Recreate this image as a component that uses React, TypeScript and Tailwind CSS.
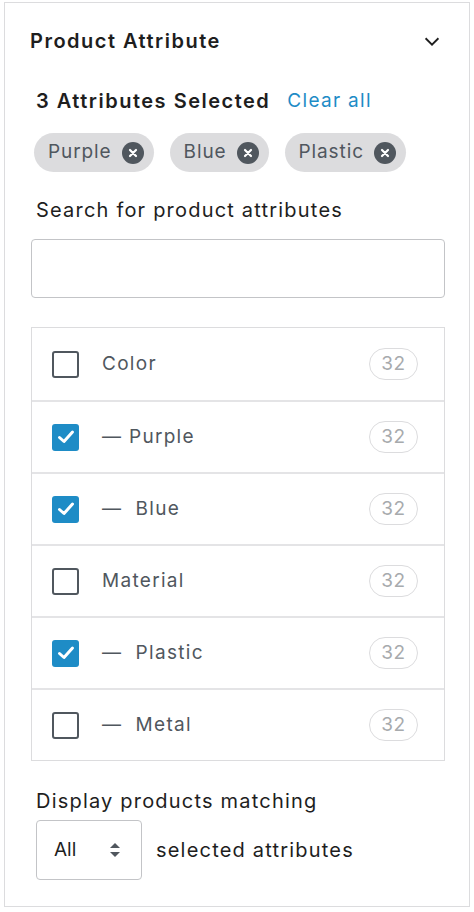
import React from 'react';

const font = { fontFamily: 'Inter, "Noto Sans", sans-serif' };

const Chip: React.FC<{ label: string }> = ({ label }) => (
    <span className="flex items-center gap-[10px] h-[39px] pl-[14px] pr-[10px] rounded-full bg-[#dcdcde] text-[19px] tracking-[0.9px] text-[#50575e]">
        {label}
        <span className="w-[22px] h-[22px] rounded-full bg-[#50575e] flex items-center justify-center">
            <svg width="10" height="10" viewBox="0 0 10 10">
                <path d="M2 2 L8 8 M8 2 L2 8" stroke="#fff" strokeWidth="2.2" strokeLinecap="round" />
            </svg>
        </span>
    </span>
);

const rows = [
    { label: 'Color', checked: false },
    { label: '— Purple', checked: true },
    { label: '—  Blue', checked: true },
    { label: 'Material', checked: false },
    { label: '—  Plastic', checked: true },
    { label: '—  Metal', checked: false },
];

const Checkbox: React.FC<{ checked: boolean }> = ({ checked }) =>
    checked ? (
        <span className="w-[27px] h-[27px] rounded-[3px] bg-[#1e8cc6] flex items-center justify-center">
            <svg width="20" height="20" viewBox="0 0 20 20">
                <path d="M3.5 10.5 L8 14.5 L16.5 5" fill="none" stroke="#fff" strokeWidth="3" strokeLinecap="round" strokeLinejoin="round" />
            </svg>
        </span>
    ) : (
        <span className="w-[27px] h-[27px] rounded-[3px] border-[2.5px] border-[#50575e] bg-white" />
    );

export default function App() {
    return (
        <div className="min-h-screen bg-white pt-[2px] px-[4px]" style={font}>
            <div className="border border-[#dcdcde] h-[905px] flex flex-col">
                <div className="flex items-center justify-between pl-[25px] pr-[26px] pt-[23px]">
                    <h2 className="text-[20px] font-semibold text-[#1e1e1e] tracking-[1.5px]">Product Attribute</h2>
                    <svg width="22" height="22" viewBox="0 0 24 24">
                        <path d="M5 9 L12 16 L19 9" fill="none" stroke="#1e1e1e" strokeWidth="2" />
                    </svg>
                </div>
                <div className="pl-[31px] pt-[30px] flex items-center gap-[17px]">
                    <span className="text-[20px] font-semibold text-[#1e1e1e] tracking-[1.5px]">3 Attributes Selected</span>
                    <button className="text-[19px] tracking-[1.3px] text-[#1e8cc6]">Clear all</button>
                </div>
                <div className="pl-[29px] pt-[17px] flex gap-[16px]">
                    <Chip label="Purple" />
                    <Chip label="Blue" />
                    <Chip label="Plastic" />
                </div>
                <label className="pl-[31px] pt-[23px] text-[20px] tracking-[1.2px] text-[#1e1e1e]">Search for product attributes</label>
                <div className="pl-[26px] pr-[24px] pt-[14px]">
                    <input className="w-full h-[59px] border border-[#c3c4c7] rounded-[4px] px-3 outline-none" />
                </div>
                <div className="mx-[26px] mt-[29px] mr-[24px] border border-[#dcdcde]">
                    {rows.map((r, i) => (
                        <div
                            key={r.label}
                            className={`h-[72px] flex items-center pl-[20px] pr-[26px] ${i > 0 ? 'border-t-2 border-[#e4e4e6]' : ''}`}
                        >
                            <Checkbox checked={r.checked} />
                            <span className="ml-[23px] text-[19px] text-[#50575e] whitespace-pre flex-1 tracking-[1.3px]">{r.label}</span>
                            <span className="h-[32px] w-[49px] rounded-full border border-[#dcdcde] text-[19px] tracking-[0.5px] text-[#a7aaad] flex items-center justify-center">
                                32
                            </span>
                        </div>
                    ))}
                </div>
                <div className="pl-[31px] pt-[25px] text-[20px] tracking-[1.2px] text-[#1e1e1e]">Display products matching</div>
                <div className="pl-[31px] pt-[4px] flex items-center gap-[14px]">
                    <div className="w-[106px] h-[60px] border border-[#c3c4c7] rounded-[4px] flex items-center justify-between pl-[17px] pr-[20px]">
                        <span className="text-[19px] text-[#1e1e1e]">All</span>
                        <svg width="12" height="20" viewBox="0 0 12 20">
                            <path d="M1 8 L6 3 L11 8 Z" fill="#50575e" />
                            <path d="M1 12 L6 17 L11 12 Z" fill="#50575e" />
                        </svg>
                    </div>
                    <span className="text-[20px] tracking-[1.2px] text-[#1e1e1e]">selected attributes</span>
                </div>
            </div>
        </div>
    );
}
